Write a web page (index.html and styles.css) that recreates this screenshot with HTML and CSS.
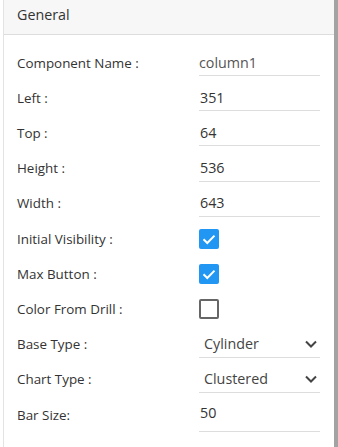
FILE: index.html
```html
<!DOCTYPE html>
<html>
<head>
<meta charset="utf-8">
<link rel="stylesheet" href="styles.css">
</head>
<body>
<div class="frame">
  <div class="panel">
    <div class="panel-head">General</div>
    <div class="form">
      <div class="row"><span class="label">Component Name :</span><div class="field text muted">column1</div></div>
      <div class="row"><span class="label">Left :</span><div class="field text">351</div></div>
      <div class="row"><span class="label">Top :</span><div class="field text">64</div></div>
      <div class="row"><span class="label">Height :</span><div class="field text">536</div></div>
      <div class="row"><span class="label">Width :</span><div class="field text">643</div></div>
      <div class="row"><span class="label">Initial Visibility :</span><div class="check on"><svg viewBox="0 0 20 20" width="20" height="20"><path d="M4.5 10.2 L8.3 14 L15.5 6.6" fill="none" stroke="#fff" stroke-width="2"/></svg></div></div>
      <div class="row"><span class="label">Max Button :</span><div class="check on"><svg viewBox="0 0 20 20" width="20" height="20"><path d="M4.5 10.2 L8.3 14 L15.5 6.6" fill="none" stroke="#fff" stroke-width="2"/></svg></div></div>
      <div class="row"><span class="label">Color From Drill :</span><div class="check"></div></div>
      <div class="row"><span class="label">Base Type :</span><div class="field select"><span>Cylinder</span><svg class="chev" viewBox="0 0 14 10" width="14" height="10"><path d="M2 2.5 L7 7.5 L12 2.5" fill="none" stroke="#444" stroke-width="2"/></svg></div></div>
      <div class="row"><span class="label">Chart Type :</span><div class="field select"><span>Clustered</span><svg class="chev" viewBox="0 0 14 10" width="14" height="10"><path d="M2 2.5 L7 7.5 L12 2.5" fill="none" stroke="#444" stroke-width="2"/></svg></div></div>
      <div class="row last"><span class="label">Bar Size:</span><div class="field text">50</div></div>
    </div>
  </div>
  <div class="scrollbar"></div>
</div>
</body>
</html>
```
FILE: styles.css
```css
html, body {
  margin: 0;
  padding: 0;
  background: #ffffff;
}
body {
  font-family: "Open Sans", "Noto Sans", sans-serif;
  color: #333333;
  width: 338px;
  height: 447px;
  overflow: hidden;
}
.frame {
  display: flex;
  height: 447px;
  padding-left: 3px;
}
.panel {
  width: 330px;
  border-left: 1px solid #e3e3e3;
  background: #fff;
}
.scrollbar {
  width: 4px;
  background: #a3a3a3;
}
.panel-head {
  height: 35px;
  box-sizing: border-box;
  background: #f7f7f7;
  border-bottom: 1px solid #dddddd;
  padding-left: 13px;
  font-size: 14.3px;
  line-height: 30px;
  color: #333;
}
.form {
  padding-top: 10px;
  padding-left: 13px;
}
.row {
  height: 35.2px;
  display: flex;
  align-items: center;
}
.label {
  width: 182px;
  font-size: 13.4px;
  color: #333;
}
.field {
  width: 121px;
  height: 27px;
  box-sizing: border-box;
  border-bottom: 1px solid #dddddd;
  font-size: 14.3px;
  display: flex;
  align-items: center;
  color: #333;
}
.field.text {
  padding-left: 1px;
}
.field.muted {
  color: #555;
  padding-left: 0;
}
.field.select {
  padding-left: 5px;
  padding-right: 2px;
  justify-content: space-between;
  color: #444;
}
.row.last {
  align-items: flex-start;
}
.row.last .label {
  margin-top: 9px;
}
.row.last .field {
  height: 35px;
  padding-top: 1px;
  padding-bottom: 3px;
}
.check {
  width: 20px;
  height: 20px;
  box-sizing: border-box;
  border: 2px solid #666;
  border-radius: 2px;
}
.check.on {
  border: none;
  background: #2196f3;
}
.check svg {
  display: block;
}
```
